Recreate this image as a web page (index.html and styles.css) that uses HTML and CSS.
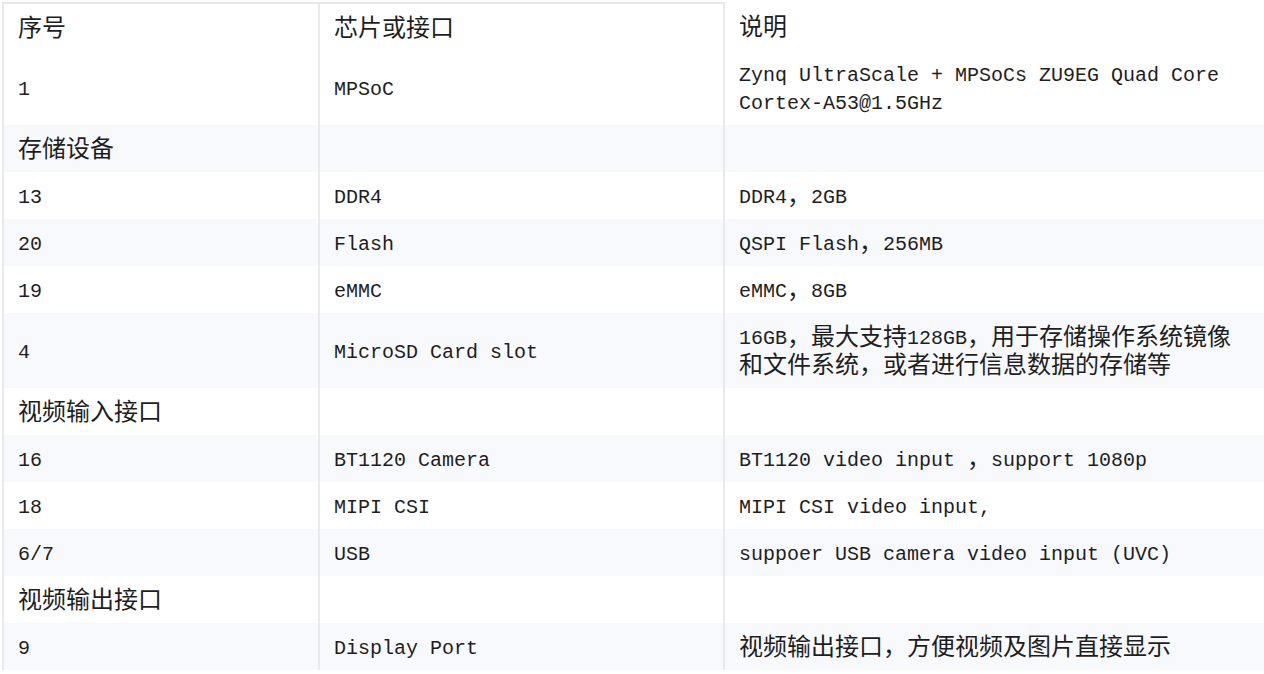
FILE: index.html
```html
<!DOCTYPE html>
<html lang="zh-CN">
<head>
<meta charset="utf-8">
<title>硬件配置</title>
<link rel="stylesheet" href="styles.css">
</head>
<body>
<div class="wrap">
<table class="spec">
  <colgroup>
    <col class="c1">
    <col class="c2">
    <col class="c3">
  </colgroup>
  <thead>
    <tr>
      <th class="top"><span class="zh">序号</span></th>
      <th class="top"><span class="zh">芯片或接口</span></th>
      <th><span class="zh">说明</span></th>
    </tr>
  </thead>
  <tbody>
    <tr>
      <td>1</td>
      <td>MPSoC</td>
      <td>Zynq UltraScale + MPSoCs ZU9EG Quad Core Cortex-A53@1.5GHz</td>
    </tr>
    <tr>
      <td><span class="zh">存储设备</span></td>
      <td></td>
      <td></td>
    </tr>
    <tr>
      <td>13</td>
      <td>DDR4</td>
      <td>DDR4<span class="zh">，</span>2GB</td>
    </tr>
    <tr>
      <td>20</td>
      <td>Flash</td>
      <td>QSPI Flash<span class="zh">，</span>256MB</td>
    </tr>
    <tr>
      <td>19</td>
      <td>eMMC</td>
      <td>eMMC<span class="zh">，</span>8GB</td>
    </tr>
    <tr>
      <td>4</td>
      <td>MicroSD Card slot</td>
      <td>16GB<span class="zh">，最大支持</span>128GB<span class="zh">，用于存储操作系统镜像</span><span class="zh">和文件系统，或者进行信息数据的存储等</span></td>
    </tr>
    <tr>
      <td><span class="zh">视频输入接口</span></td>
      <td></td>
      <td></td>
    </tr>
    <tr>
      <td>16</td>
      <td>BT1120 Camera</td>
      <td>BT1120 video input <span class="zh">，</span>support 1080p</td>
    </tr>
    <tr>
      <td>18</td>
      <td>MIPI CSI</td>
      <td>MIPI CSI video input,</td>
    </tr>
    <tr>
      <td>6/7</td>
      <td>USB</td>
      <td>suppoer USB camera video input (UVC)</td>
    </tr>
    <tr>
      <td><span class="zh">视频输出接口</span></td>
      <td></td>
      <td></td>
    </tr>
    <tr>
      <td>9</td>
      <td>Display Port</td>
      <td><span class="zh">视频输出接口，方便视频及图片直接显示</span></td>
    </tr>
  </tbody>
</table>
</div>
</body>
</html>
```

FILE: styles.css
```css
html, body {
  margin: 0;
  padding: 0;
  background: #ffffff;
}

.wrap {
  padding: 2px 0 0 2px;
}

.spec {
  width: 1262px;
  table-layout: fixed;
  border-collapse: separate;
  border-spacing: 0;
  font-family: "Liberation Mono", "Noto Sans CJK SC", monospace;
  font-size: 20px;
  line-height: 28px;
  color: #1e1e1e;
}

.c1 { width: 316px; }
.c2 { width: 405px; }

.spec th,
.spec td {
  text-align: left;
  font-weight: normal;
  vertical-align: middle;
  padding: 12px 14px 7px 14px;
  border-left: 2px solid #e9e9ee;
  word-wrap: break-word;
}

.spec th {
  padding: 12px 14px 6px 14px;
}

.spec th.top {
  border-top: 2px solid #e8e8f2;
}

.spec tbody tr:nth-child(even) td {
  background: #f8f9fc;
}

.zh {
  font-family: "Noto Sans CJK SC", sans-serif;
  font-size: 24px;
  line-height: 16px;
  vertical-align: -1px;
}
```
